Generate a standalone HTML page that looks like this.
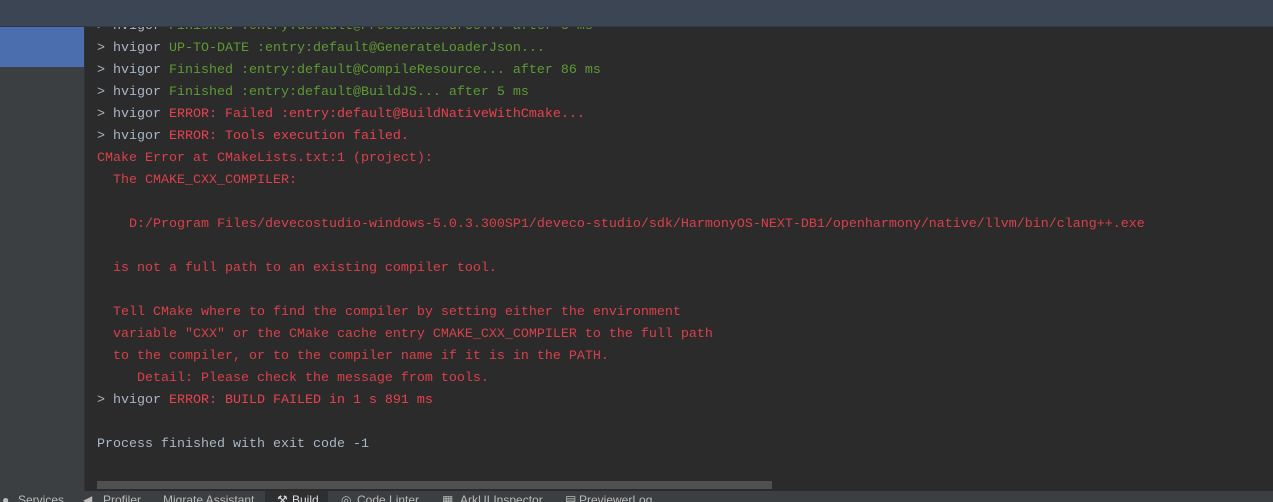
<!DOCTYPE html>
<html><head><meta charset="utf-8"><style>
html,body{margin:0;padding:0;width:1273px;height:502px;overflow:hidden;background:#2b2b2b}
.top{position:absolute;left:0;top:0;width:1273px;height:26px;background:#3c4554;border-bottom:1px solid #323843;z-index:2;overflow:hidden}
.left{position:absolute;left:0;top:27px;width:84px;height:464px;background:#3c3f41}
.sel{position:absolute;left:0;top:27px;width:84px;height:40px;background:#4b6eaf}
.div{position:absolute;left:84px;top:27px;width:1px;height:464px;background:#323232}
.con{position:absolute;left:97px;top:16px;font-family:"Liberation Mono",monospace;font-size:13.33px;line-height:22px;white-space:pre;color:#a9b7c6}
.g{color:#5e9a34}.r{color:#e8414e}.d{color:#d9404b}.p{color:#a9b7c6}
.sb{position:absolute;left:97px;top:481px;width:675px;height:8px;background:#505050}
.bot{position:absolute;left:0;top:491px;width:1273px;height:11px;background:#3c3f41;font-family:"Liberation Sans",sans-serif;font-size:12px;color:#bbb;overflow:hidden;z-index:3}
.bot span{position:absolute;top:2px;white-space:nowrap}
.bt{position:absolute;left:265px;top:0;width:63px;height:11px;background:#2d2f30}
</style></head><body>
<div class="top"></div>
<div class="left"></div><div class="sel"></div><div class="div"></div>
<div class="con"><span>&gt; hvigor </span><span class="g">Finished :entry:default@ProcessResource... after 3 ms</span>
<span>&gt; hvigor </span><span class="g">UP-TO-DATE :entry:default@GenerateLoaderJson...</span>
<span>&gt; hvigor </span><span class="g">Finished :entry:default@CompileResource... after 86 ms</span>
<span>&gt; hvigor </span><span class="g">Finished :entry:default@BuildJS... after 5 ms</span>
<span>&gt; hvigor </span><span class="r">ERROR: Failed :entry:default@BuildNativeWithCmake...</span>
<span>&gt; hvigor </span><span class="r">ERROR: Tools execution failed.</span>
<span class="d">CMake Error at CMakeLists.txt:1 (project):
  The CMAKE_CXX_COMPILER:

    D:/Program Files/devecostudio-windows-5.0.3.300SP1/deveco-studio/sdk/HarmonyOS-NEXT-DB1/openharmony/native/llvm/bin/clang++.exe

  is not a full path to an existing compiler tool.

  Tell CMake where to find the compiler by setting either the environment
  variable "CXX" or the CMake cache entry CMAKE_CXX_COMPILER to the full path
  to the compiler, or to the compiler name if it is in the PATH.
     Detail: Please check the message from tools.</span>
<span>&gt; hvigor </span><span class="r">ERROR: BUILD FAILED in 1 s 891 ms</span>

<span class="p">Process finished with exit code -1</span></div>
<div class="sb"></div>
<div class="bot"><div class="bt"></div>
<span style="left:2px">●</span><span style="left:18px">Services</span>
<span style="left:83px">◀</span><span style="left:103px">Profiler</span>
<span style="left:163px">Migrate Assistant</span>
<span style="left:277px;color:#ddd">⚒</span><span style="left:292px;color:#ddd">Build</span>
<span style="left:341px">◎</span><span style="left:357px">Code Linter</span>
<span style="left:442px">▦</span><span style="left:460px">ArkUI Inspector</span>
<span style="left:565px">▤</span><span style="left:579px">PreviewerLog</span></div>
</body></html>
